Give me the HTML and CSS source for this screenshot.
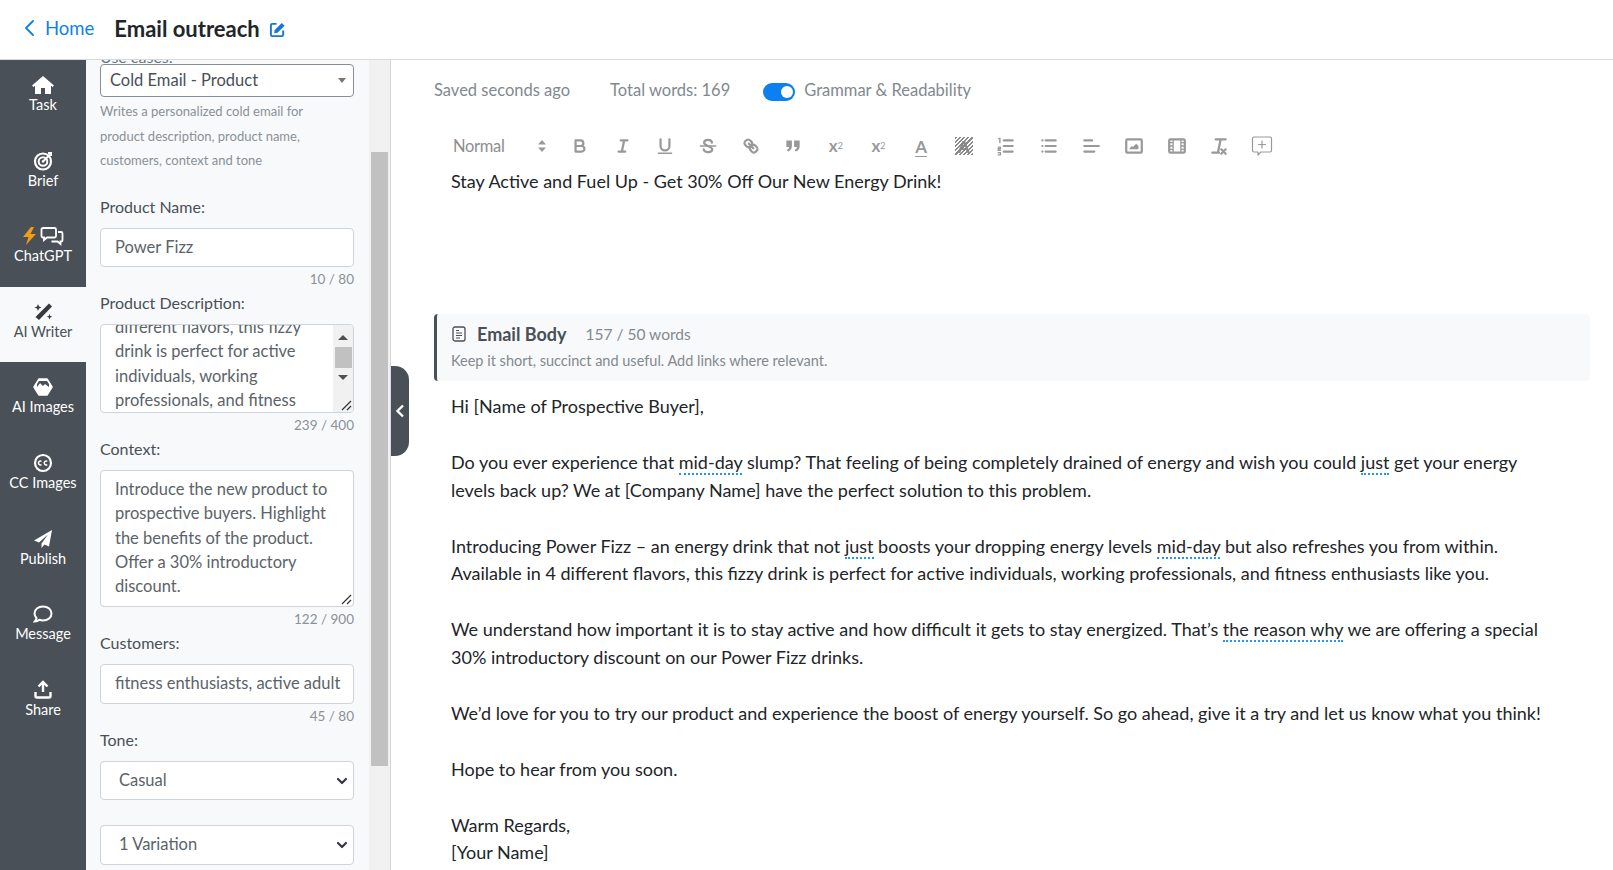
FILE: index.html
```html
<!DOCTYPE html>
<html lang="en">
<head>
<meta charset="utf-8">
<title>Email outreach</title>
<link rel="stylesheet" href="styles.css">
</head>
<body>
<svg class="defs" width="0" height="0" aria-hidden="true"><defs>
<symbol id="dn" viewBox="0 0 12 12"><path d="M2 4l4 4 4-4" fill="none" stroke="currentColor" stroke-width="2.2" stroke-linecap="round" stroke-linejoin="round"/></symbol>
</defs></svg>
<header class="topbar">
  <svg class="back" viewBox="0 0 12 18" width="12" height="18"><path d="M10 2L3 9l7 7" fill="none" stroke="#0d7ff0" stroke-width="1.8" stroke-linecap="round" stroke-linejoin="round"/></svg>
  <a class="home">Home</a>
  <h1 class="title">Email outreach</h1>
  <svg class="edit" viewBox="0 0 18 18" width="17" height="17"><path d="M8 3H3.5A1.5 1.5 0 0 0 2 4.500V14.500A1.500 1.500 0 0 0 3.500 16H13.500A1.500 1.500 0 0 0 15 14.500V10" fill="none" stroke="#1477d8" stroke-width="2"/><path d="M6 9.500L13.500 2 16.500 5 9 12.500 5.500 13z" fill="#1477d8"/></svg>
</header>
<div class="app">
  <nav class="rail">
    <a class="rail-item"><svg viewBox="0 0 24 20" width="24" height="20"><path d="M12 1L1 10.500 2.500 12 4 10.800V19H10V13H14V19H20V10.800L21.500 12 23 10.500z" fill="#fff"/></svg><span>Task</span></a>
    <a class="rail-item"><svg viewBox="0 0 20 20" width="20" height="20"><circle cx="10" cy="10.500" r="8" fill="none" stroke="#fff" stroke-width="2.200"/><circle cx="10" cy="10.500" r="4.300" fill="none" stroke="#fff" stroke-width="2"/><circle cx="10" cy="10.500" r="1.200" fill="#fff"/><path d="M10 10.500L17 3.500M15 2h3v3" fill="none" stroke="#fff" stroke-width="2"/></svg><span>Brief</span></a>
    <a class="rail-item"><span class="gpt-icons"><svg viewBox="0 0 15 20" width="15" height="20"><path d="M9 1L1 11H6.500L4 19 14 8H8.500L12 1z" fill="#f39c12"/></svg><svg viewBox="0 0 24 20" width="24" height="20"><path d="M3 2H14.500A1.500 1.500 0 0 1 16 3.500V10A1.500 1.500 0 0 1 14.500 11.500H7L4 14V11.500H3A1.500 1.500 0 0 1 1.500 10V3.500A1.500 1.500 0 0 1 3 2z" fill="none" stroke="#fff" stroke-width="1.800"/><path d="M18 6H21A1.500 1.500 0 0 1 22.500 7.500V14A1.500 1.500 0 0 1 21 15.500H20.500V18L17.500 15.500H11.500" fill="none" stroke="#fff" stroke-width="1.800"/></svg></span><span>ChatGPT</span></a>
    <a class="rail-item active"><svg viewBox="0 0 22 20" width="22" height="20"><path d="M17 1.500L20 4.500 7 18 3.500 15z" fill="#343a40"/><path d="M6 2l1 2.500L9.500 5.500 7 6.500 6 9 5 6.500 2.500 5.500 5 4.500zM17.500 12l.8 2 2 .8-2 .8-.8 2-.8-2-2-.8 2-.8z" fill="#343a40"/></svg><span>AI Writer</span></a>
    <a class="rail-item"><svg viewBox="0 0 20 20" width="20" height="20"><path d="M6 2H14L19 10 14 18H6L1 10z" fill="#fff" stroke="#fff" stroke-linejoin="round" stroke-width="1.500"/><path d="M3.500 10L7 5.500 9.500 8 11.500 6 16.500 10 13 6H7z" fill="#495057"/><path d="M4 10l3-4 3 3 2-2 4 3V7L14 4H6L4 7z" fill="#495057"/></svg><span>AI Images</span></a>
    <a class="rail-item"><svg viewBox="0 0 20 20" width="20" height="20"><circle cx="10" cy="10" r="8" fill="none" stroke="#fff" stroke-width="2.200"/><path d="M8.500 8.300A2 2 0 1 0 8.500 11.700M14.300 8.300A2 2 0 1 0 14.300 11.700" fill="none" stroke="#fff" stroke-width="1.500"/></svg><span>CC Images</span></a>
    <a class="rail-item"><svg viewBox="0 0 20 20" width="20" height="20"><path d="M19 1L1 11.500 6 13.500 15 5.500 8.500 14.500V19L11.500 15.500 16 17.500z" fill="#fff"/></svg><span>Publish</span></a>
    <a class="rail-item"><svg viewBox="0 0 20 20" width="20" height="20"><path d="M10 2.500C5 2.500 1.500 5.500 1.500 9.500 1.500 11.300 2.300 12.800 3.500 14 3.300 15.500 2.500 16.800 1.800 17.500 4 17.500 5.700 16.500 6.500 15.800 7.500 16.200 8.700 16.400 10 16.400 15 16.400 18.500 13.400 18.500 9.500S15 2.500 10 2.500z" fill="none" stroke="#fff" stroke-width="2"/></svg><span>Message</span></a>
    <a class="rail-item"><svg viewBox="0 0 20 20" width="20" height="20"><path d="M10 12V2.500M5.500 6.500L10 2l4.500 4.500" fill="none" stroke="#fff" stroke-width="2.400"/><path d="M2.500 12V16A1.500 1.500 0 0 0 4 17.500H16A1.500 1.500 0 0 0 17.500 16V12" fill="none" stroke="#fff" stroke-width="2.400"/></svg><span>Share</span></a>
  </nav>

  <aside class="panel">
    <div class="panel-scroll">
      <label class="clipped-label">Use cases:</label>
      <div class="fake-select first">Cold Email - Product<i class="caret"></i></div>
      <p class="hint">Writes a personalized cold email for<br>product description, product name,<br>customers, context and tone</p>
      <label class="lbl lbl-name">Product Name:</label>
      <div class="box input">Power Fizz</div>
      <div class="count">10 / 80</div>
      <label class="lbl">Product Description:</label>
      <div class="box area desc">
        <div class="desc-text">different flavors, this fizzy<br>drink is perfect for active<br>individuals, working<br>professionals, and fitness</div>
        <div class="mini-scroll"><i class="up"></i><b></b><i class="down"></i></div>
        <svg class="grip" viewBox="0 0 12 12" width="12" height="12"><path d="M2 11L11 2M7 11L11 7" stroke="#333" stroke-width="1.200"/></svg>
      </div>
      <div class="count">239 / 400</div>
      <label class="lbl">Context:</label>
      <div class="box area ctx">Introduce the new product to<br>prospective buyers. Highlight<br>the benefits of the product.<br>Offer a 30% introductory<br>discount.
        <svg class="grip" viewBox="0 0 12 12" width="12" height="12"><path d="M2 11L11 2M7 11L11 7" stroke="#333" stroke-width="1.200"/></svg>
      </div>
      <div class="count">122 / 900</div>
      <label class="lbl">Customers:</label>
      <div class="box input">fitness enthusiasts, active adult</div>
      <div class="count">45 / 80</div>
      <label class="lbl">Tone:</label>
      <div class="box input pick">Casual<svg class="chev" width="12" height="12"><use href="#dn"/></svg></div>
      <div class="box input pick var">1 Variation<svg class="chev" width="12" height="12"><use href="#dn"/></svg></div>
    </div>
    <div class="scrolltrack"><div class="thumb"></div></div>
  </aside>
  <div class="handle-wrap">
    <button class="handle" aria-label="Collapse"><svg viewBox="0 0 10 14" width="10" height="14"><path d="M8 1.500L2.500 7 8 12.500" fill="none" stroke="#fff" stroke-width="2.400"/></svg></button>
  </div>

  <main class="editor">
    <div class="status">
      <span class="saved">Saved seconds ago</span>
      <span class="total">Total words: 169</span>
      <span class="toggle"><i></i></span>
      <span>Grammar &amp; Readability</span>
    </div>
    <div class="toolbar">
      <span class="normal">Normal</span>
      <svg class="updown" viewBox="0 0 10 14" width="10" height="14"><path d="M5 1L9 5.500H1zM5 13L1 8.500H9z" fill="#999"/></svg>
      <span class="tb"><svg viewBox="0 0 18 18"><path d="M5 4H9.500A2.500 2.500 0 0 1 12 6.500 2.500 2.500 0 0 1 9.500 9H5zM5 9H10.500A2.500 2.500 0 0 1 13 11.500 2.500 2.500 0 0 1 10.500 14H5z"/></svg></span>
      <span class="tb"><svg viewBox="0 0 18 18"><path d="M7 4H13M5 14H11M8 14L10 4"/></svg></span>
      <span class="tb"><svg viewBox="0 0 18 18"><path d="M5 3V9A4 4 0 0 0 13 9V3"/><path class="thin" d="M3 15.500H15"/></svg></span>
      <span class="tb"><svg viewBox="0 0 18 18"><path d="M12.500 6C12.500 4.500 11 3.500 9 3.500S5.500 4.500 5.500 6 7 8 9 9 12.800 10.500 12.800 12.200 11 14.500 9 14.500 5.200 13.500 5.200 12"/><path class="thin" d="M2 9H16"/></svg></span>
      <span class="tb"><svg viewBox="0 0 18 18"><path d="M7 7L11 11M8.900 4.577A3.476 3.476 0 0 1 9.260 9.256 3.476 3.476 0 0 1 4.577 8.900C3.185 7.500 2.035 6.400 4.217 4.217S7.500 3.185 8.900 4.577ZM13.423 9.100A3.476 3.476 0 0 0 8.744 8.740 3.476 3.476 0 0 0 9.104 13.419C10.496 14.811 11.604 15.961 13.783 13.779S14.815 10.500 13.423 9.100Z"/></svg></span>
      <span class="tb"><svg viewBox="0 0 18 18"><path class="solid" d="M3 4H8V9C8 11.500 6.800 13.300 4.500 14L3.500 12.500C4.800 12 5.500 11.200 5.500 10H3zM10 4H15V9C15 11.500 13.800 13.300 11.500 14L10.500 12.500C11.800 12 12.500 11.200 12.500 10H10z"/></svg></span>
      <span class="tb glyph">x<sub>2</sub></span>
      <span class="tb glyph">x<sup>2</sup></span>
      <span class="tb color">A</span>
      <span class="tb hatch">A</span>
      <span class="tb"><svg viewBox="0 0 18 18"><path d="M7 4H15M7 9H15M7 14H15"/><path class="thin" d="M2.500 2.500L3.500 2V6M2 10H4V11.500H2V13H4M2 15H4V17H2"/></svg></span>
      <span class="tb"><svg viewBox="0 0 18 18"><path d="M6 4H15M6 9H15M6 14H15"/><path d="M3 4H3.100M3 9H3.100M3 14H3.100"/></svg></span>
      <span class="tb"><svg viewBox="0 0 18 18"><path d="M3 4H10M3 9H16M3 14H12"/></svg></span>
      <span class="tb"><svg viewBox="0 0 18 18"><rect x="2" y="3" width="14" height="12" rx="1"/><path class="solid" d="M5 12V11L7 9 8 10 11 7 13 9V12z"/></svg></span>
      <span class="tb"><svg viewBox="0 0 18 18"><rect x="2" y="3" width="14" height="12" rx="1"/><path d="M5.500 3V15M12.500 3V15M2 9H5.500M12.500 9H16M5.500 6H2M5.500 12H2M16 6H12.500M16 12H12.500" class="thin"/></svg></span>
      <span class="tb"><svg viewBox="0 0 18 18"><path d="M6 3H15M10.500 3L8 15M3 15H9"/><path d="M11 12L15 16M15 12L11 16"/></svg></span>
      <span class="tb cm"><svg viewBox="0 0 22 22"><path class="thin" d="M3 2H19A1.500 1.500 0 0 1 20.500 3.500V15.500A1.500 1.500 0 0 1 19 17H10L7 20V17H3A1.500 1.500 0 0 1 1.500 15.500V3.500A1.500 1.500 0 0 1 3 2zM11 6V13M7.500 9.500H14.500"/></svg></span>
    </div>
    <div class="subject">Stay Active and Fuel Up - Get 30% Off Our New Energy Drink!</div>
    <section class="section-head">
      <div class="sh-top">
        <svg viewBox="0 0 14 16" width="14" height="16"><rect x="1" y="1" width="12" height="14" rx="2" fill="none" stroke="#495057" stroke-width="1.300"/><path d="M4 4.500H7M4 7H10M4 9.500H10M4 12H8" stroke="#495057" stroke-width="1.200"/></svg>
        <strong>Email Body</strong><span>157 / 50 words</span>
      </div>
      <div class="sh-sub">Keep it short, succinct and useful. Add links where relevant.</div>
    </section>
    <article class="body">
      <p>Hi [Name of Prospective Buyer],</p>
      <p>Do you ever experience that <u>mid-day</u> slump? That feeling of being completely drained of energy and wish you could <u>just</u> get your energy<br>levels back up? We at [Company Name] have the perfect solution to this problem.</p>
      <p>Introducing Power Fizz – an energy drink that not <u>just</u> boosts your dropping energy levels <u>mid-day</u> but also refreshes you from within.<br>Available in 4 different flavors, this fizzy drink is perfect for active individuals, working professionals, and fitness enthusiasts like you.</p>
      <p>We understand how important it is to stay active and how difficult it gets to stay energized. That’s <u>the reason why</u> we are offering a special<br>30% introductory discount on our Power Fizz drinks.</p>
      <p>We’d love for you to try our product and experience the boost of energy yourself. So go ahead, give it a try and let us know what you think!</p>
      <p>Hope to hear from you soon.</p>
      <p>Warm Regards,<br>[Your Name]</p>
    </article>
  </main>
</div>
</body>
</html>
```
FILE: styles.css
```css
* { box-sizing: border-box; }
html, body { margin: 0; height: 100%; overflow: hidden; }
body { font-family: "Lato", "Noto Sans", sans-serif; color: #212529; background: #fff; width: 1613px; height: 870px; }
.defs { position: absolute; }

.topbar { height: 60px; display: flex; align-items: center; border-bottom: 1px solid #d9d9d9; padding-left: 23px; padding-bottom: 3px; }
.back { margin-right: 10px; }
.home { color: #0d7ff0; font-size: 18.500px; margin-right: 20px; }
.title { margin: 0; font-size: 22px; font-weight: 700; color: #212529; margin-right: 9px; }
.edit { margin-top: 2px; }

.app { display: flex; height: 810px; }
.rail { width: 86px; background: #495057; flex: none; }
.rail-item { height: 75.600px; display: flex; flex-direction: column; align-items: center; padding-top: 15px; color: #fff; font-size: 14.500px; line-height: 19px; }
.rail-item svg { display: block; }
.rail-item.active { background: #f8f9fa; color: #495057; }
.gpt-icons { display: flex; gap: 3px; height: 20px; }

.panel { width: 305px; flex: none; display: flex; background: #f8f9fa; border-right: 1px solid #d6d6d6; }
.panel-scroll { width: 283px; padding: 0 15px 0 14px; overflow: hidden; color: #495057; font-size: 16px; }
.clipped-label { display: block; height: 17px; margin-top: -13px; color: #6c757d; font-size: 16px; line-height: 20px; }
.fake-select { height: 33px; border: 1px solid #868e96; border-radius: 4px; background: #fff; padding: 0 9px; line-height: 30px; position: relative; margin-top: 0; font-size: 16.500px; }
.caret { position: absolute; right: 7px; top: 13px; border: 4px solid transparent; border-top: 5px solid #777; border-bottom: 0; }
.hint { margin: 2px 0 0; font-size: 13px; line-height: 24.500px; color: #8a9197; }
.lbl { display: block; font-size: 16px; line-height: 22px; color: #495057; }
.lbl-name { margin-top: 23px; }
.box { border: 1px solid #ced4da; border-radius: 4px; background: #fff; color: #5b6369; font-size: 16.500px; }
.input { height: 39.500px; margin-top: 10px; padding-left: 14px; line-height: 37px; white-space: nowrap; overflow: hidden; }
.count { text-align: right; font-size: 13.500px; color: #8a9197; height: 24px; line-height: 24px; margin-bottom: 1px; }
.area { margin-top: 10px; position: relative; overflow: hidden; line-height: 24.300px; padding-left: 14px; }
.desc { height: 89px; }
.desc-text { margin-top: -10px; }
.ctx { height: 137px; padding-top: 6px; margin-bottom: 0; }
.grip { position: absolute; right: 1px; bottom: 1px; }
.mini-scroll { position: absolute; top: 0; right: 0; bottom: 0; width: 20px; background: #f1f1f1; display: flex; flex-direction: column; align-items: center; }
.mini-scroll b { display: block; width: 17px; height: 21px; background: #c1c1c1; margin: 7px 0; }
.mini-scroll i { display: block; border: 5px solid transparent; }
.mini-scroll .up { border-top: 0; border-bottom: 5px solid #505050; margin-top: 10px; }
.mini-scroll .down { border-bottom: 0; border-top: 5px solid #505050; }
.pick { padding-left: 18px; position: relative; }
.chev { position: absolute; right: 5px; top: 13px; color: #343a40; }
.var { margin-top: 25px; padding-left: 18px; }

.scrolltrack { width: 21px; background: #f1f1f1; padding: 92px 2px 0; flex: none; }
.thumb { height: 614px; width: 17px; background: #c1c1c1; }

.handle-wrap { width: 0; flex: none; position: relative; }
.handle { position: absolute; left: 0; top: 306px; width: 18px; height: 90px; border: 0; padding: 0; background: #495057; border-radius: 0 14px 14px 0; display: flex; align-items: center; justify-content: center; }

.editor { flex: 1; min-width: 0; padding: 18px 23px 0 43px; }
.status { display: flex; align-items: center; height: 24px; color: #82898f; font-size: 16.500px; }
.saved { margin-right: 40px; }
.total { margin-right: 33px; }
.toggle { width: 32px; height: 18px; border-radius: 9px; background: #0d7ff0; position: relative; margin-right: 9px; margin-top: 3px; }
.toggle i { position: absolute; right: 2px; top: 3px; width: 12px; height: 12px; border-radius: 50%; background: #fff; }
.toolbar { display: flex; align-items: center; height: 24px; margin-top: 32px; padding-left: 19px; }
.normal { width: 84px; color: #8e8e8e; font-size: 16.500px; letter-spacing: -.3px; }
.updown { margin-right: 12px; }
.tb { width: 42.600px; height: 24px; display: flex; align-items: center; justify-content: center; flex: none; color: #999; }
.tb svg { width: 20px; height: 20px; fill: none; stroke: #999; stroke-width: 2; stroke-linecap: round; stroke-linejoin: round; }
.tb .thin { stroke-width: 1.200; }
.tb .solid { fill: #999; stroke: none; }
.tb.cm svg { width: 22px; height: 22px; }
.glyph { font-weight: 700; font-size: 17px; padding-bottom: 2px; }
.glyph sub, .glyph sup { font-size: 9px; font-weight: 400; }
.color { font-weight: 700; font-size: 17px; text-decoration: underline; text-underline-offset: 3px; }
.hatch { font-weight: 900; font-size: 17px; color: #888; background: repeating-linear-gradient(135deg, #8a8a8a 0 1.500px, #fff 1.500px 3px) center / 18px 18px no-repeat; }

.subject { margin-top: 9px; margin-left: 17px; font-size: 18px; line-height: 28px; color: #212529; }
.section-head { height: 67px; margin-top: 119px; background: #f8f9fa; border-left: 3px solid #495057; border-radius: 4px; padding: 6px 0 0 14px; }
.sh-top { display: flex; align-items: center; height: 28px; color: #82898f; font-size: 15.500px; }
.sh-top svg { margin-right: 11px; margin-left: 1px; }
.sh-top strong { color: #495057; font-size: 18px; margin-right: 19px; }
.sh-sub { font-size: 14.500px; color: #82898f; line-height: 24px; margin-top: 1px; }
.body { margin-left: 17px; margin-top: 12px; font-size: 18px; line-height: 27.900px; white-space: nowrap; }
.body p { margin: 0 0 27.900px; }
.body u { text-decoration: none; border-bottom: 2px dotted #2196f3; }
```
